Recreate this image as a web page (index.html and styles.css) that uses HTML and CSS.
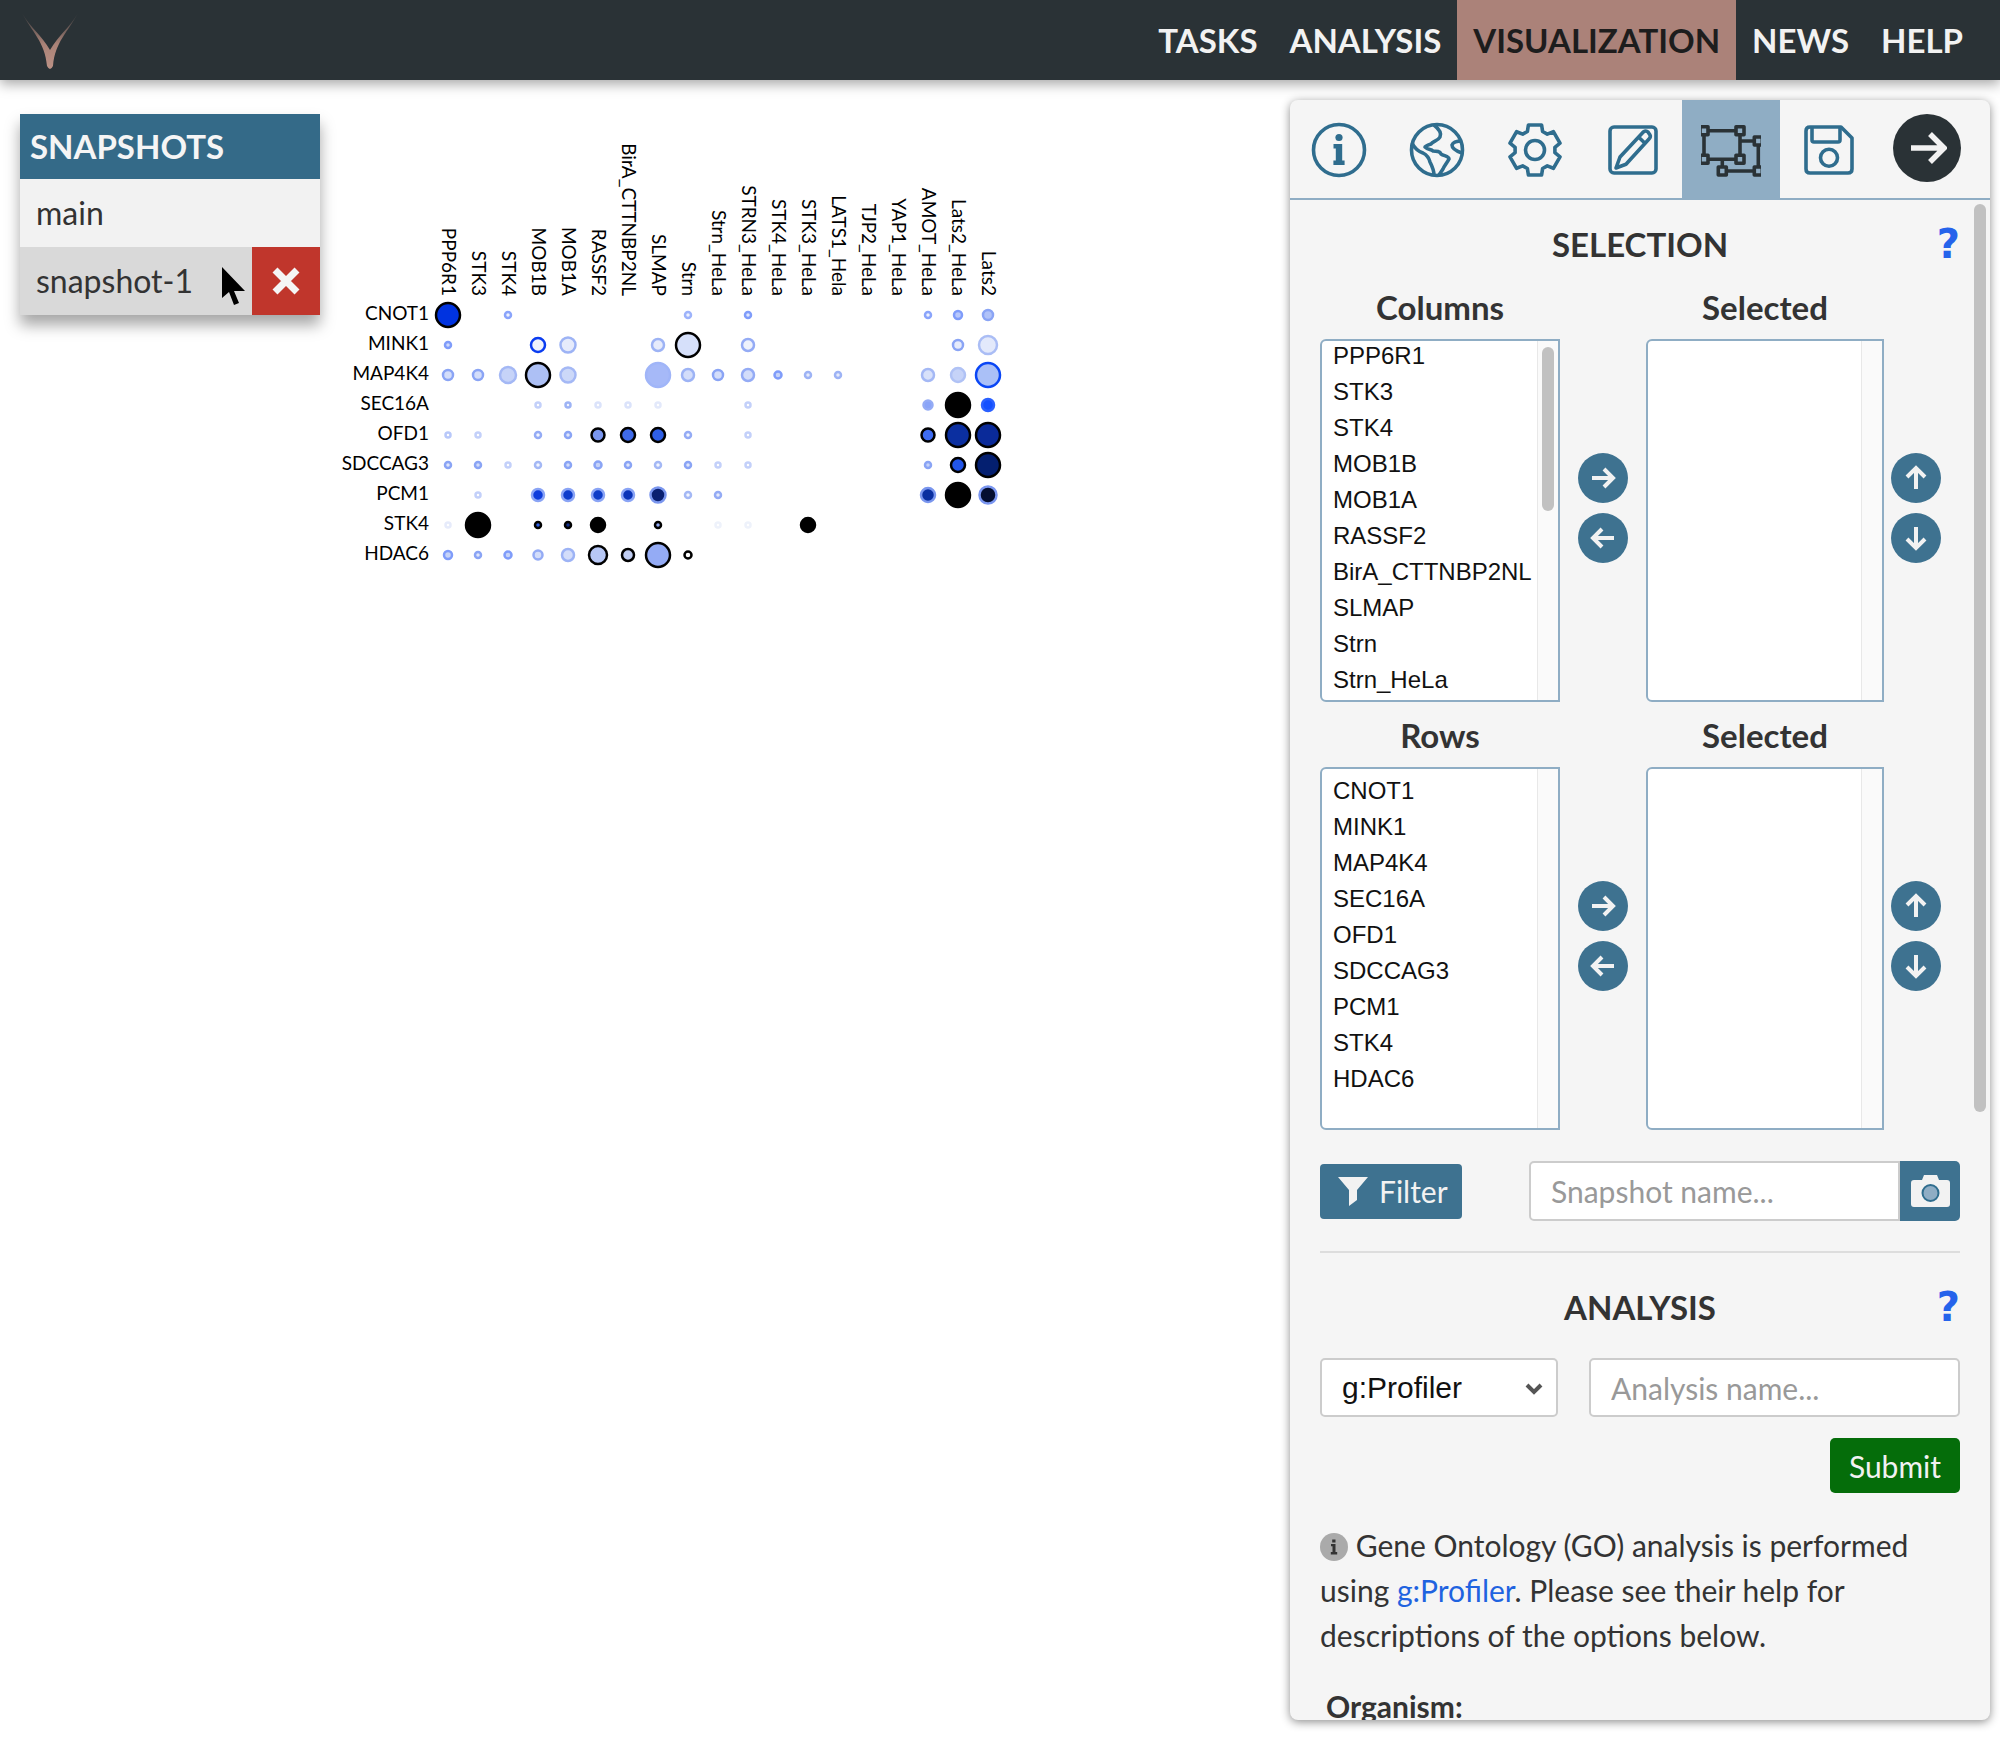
FILE: index.html
```html
<!DOCTYPE html>
<html lang="en">
<head>
    <meta charset="UTF-8">
    <title>Visualization</title>
    <link rel="stylesheet" href="styles.css">
</head>
<body>
    <header class="topbar">
        <svg class="logo" viewBox="0 0 100 80">
            <defs>
                <linearGradient id="logoFade" x1="0" y1="0" x2="0" y2="1">
                    <stop offset="0" stop-color="#2f3538"/>
                    <stop offset="0.55" stop-color="#a98277"/>
                    <stop offset="1" stop-color="#bb9185"/>
                </linearGradient>
            </defs>
            <path fill="url(#logoFade)" d="M22 13C32 32 45 42 47 66Q50 72 53 66C55 42 68 32 78 13C70 27 58 36 50 50C42 36 30 27 22 13Z"/>
        </svg>
        <nav class="topnav">
            <a class="topnav-item">TASKS</a>
            <a class="topnav-item">ANALYSIS</a>
            <a class="topnav-item active">VISUALIZATION</a>
            <a class="topnav-item">NEWS</a>
            <a class="topnav-item">HELP</a>
        </nav>
    </header>

    <main class="workspace">
        <div class="canvas">
            <section class="snapshots">
                <h2 class="snapshots-title">SNAPSHOTS</h2>
                <div class="snapshot-row">main</div>
                <div class="snapshot-row current">
                    <span class="snapshot-name">snapshot-1</span>
                    <button class="snapshot-delete">
                        <svg viewBox="0 0 30 28"><path d="M4 3L26 25M26 3L4 25"/></svg>
                    </button>
                    <svg class="cursor" viewBox="0 0 25 38"><path d="M1 0V31L8 25L13 38L18 36L13 24H24Z"/></svg>
                </div>
            </section>

            <svg class="dotplot" viewBox="330 140 680 440">
                <!-- column labels -->
                <g class="col-labels">
                    <text transform="translate(442 296) rotate(90)">PPP6R1</text>
                    <text transform="translate(472 296) rotate(90)">STK3</text>
                    <text transform="translate(502 296) rotate(90)">STK4</text>
                    <text transform="translate(532 296) rotate(90)">MOB1B</text>
                    <text transform="translate(562 296) rotate(90)">MOB1A</text>
                    <text transform="translate(592 296) rotate(90)">RASSF2</text>
                    <text transform="translate(622 296) rotate(90)">BirA_CTTNBP2NL</text>
                    <text transform="translate(652 296) rotate(90)">SLMAP</text>
                    <text transform="translate(682 296) rotate(90)">Strn</text>
                    <text transform="translate(712 296) rotate(90)">Strn_HeLa</text>
                    <text transform="translate(742 296) rotate(90)">STRN3_HeLa</text>
                    <text transform="translate(772 296) rotate(90)">STK4_HeLa</text>
                    <text transform="translate(802 296) rotate(90)">STK3_HeLa</text>
                    <text transform="translate(832 296) rotate(90)">LATS1_Hela</text>
                    <text transform="translate(862 296) rotate(90)">TJP2_HeLa</text>
                    <text transform="translate(892 296) rotate(90)">YAP1_HeLa</text>
                    <text transform="translate(922 296) rotate(90)">AMOT_HeLa</text>
                    <text transform="translate(952 296) rotate(90)">Lats2_HeLa</text>
                    <text transform="translate(982 296) rotate(90)">Lats2</text>
                </g>
                <!-- row labels -->
                <g class="row-labels">
                    <text x="429" y="320">CNOT1</text>
                    <text x="429" y="350">MINK1</text>
                    <text x="429" y="380">MAP4K4</text>
                    <text x="429" y="410">SEC16A</text>
                    <text x="429" y="440">OFD1</text>
                    <text x="429" y="470">SDCCAG3</text>
                    <text x="429" y="500">PCM1</text>
                    <text x="429" y="530">STK4</text>
                    <text x="429" y="560">HDAC6</text>
                </g>
                <!-- CNOT1 -->
                <g class="dots">
                    <circle cx="448" cy="315" r="12" fill="#0033e0" stroke="#000"/>
                    <circle cx="508" cy="315" r="3" fill="#eef2ff" stroke="#8aa4fb"/>
                    <circle cx="688" cy="315" r="3" fill="#eef2ff" stroke="#9db3fb"/>
                    <circle cx="748" cy="315" r="3" fill="#dfe7ff" stroke="#7f9cfa"/>
                    <circle cx="928" cy="315" r="3" fill="#eef2ff" stroke="#8aa4fb"/>
                    <circle cx="958" cy="315" r="4" fill="#b8c8fc" stroke="#7f9cfa"/>
                    <circle cx="988" cy="315" r="5" fill="#b0c2f8" stroke="#8aa4f5"/>
                </g>
                <!-- MINK1 -->
                <g class="dots">
                    <circle cx="448" cy="345" r="3" fill="#cfdafc" stroke="#7f9cfa"/>
                    <circle cx="538" cy="345" r="7" fill="#eef2fc" stroke="#0a3cf0"/>
                    <circle cx="568" cy="345" r="7.5" fill="#e6ebfb" stroke="#9db3f5"/>
                    <circle cx="658" cy="345" r="6" fill="#e6ebfb" stroke="#9db3f5"/>
                    <circle cx="688" cy="345" r="12" fill="#d6e0fa" stroke="#000"/>
                    <circle cx="748" cy="345" r="6" fill="#eef2fc" stroke="#94abf5"/>
                    <circle cx="958" cy="345" r="5" fill="#e6ebfb" stroke="#8aa4f5"/>
                    <circle cx="988" cy="345" r="9" fill="#e3e9fb" stroke="#aabdf5"/>
                </g>
                <!-- MAP4K4 -->
                <g class="dots">
                    <circle cx="448" cy="375" r="5" fill="#d3ddfa" stroke="#8aa4f5"/>
                    <circle cx="478" cy="375" r="5" fill="#d3ddfa" stroke="#8aa4f5"/>
                    <circle cx="508" cy="375" r="8" fill="#c6d3f8" stroke="#a4b8f5"/>
                    <circle cx="538" cy="375" r="12" fill="#adc0f5" stroke="#000"/>
                    <circle cx="568" cy="375" r="7.5" fill="#ccd8f8" stroke="#a4b8f5"/>
                    <circle cx="658" cy="375" r="12" fill="#a6b9f8" stroke="#a0b5f8"/>
                    <circle cx="688" cy="375" r="6" fill="#d3ddfa" stroke="#9db3f5"/>
                    <circle cx="718" cy="375" r="5" fill="#d3ddfa" stroke="#8aa4f5"/>
                    <circle cx="748" cy="375" r="6" fill="#d3ddfa" stroke="#94abf5"/>
                    <circle cx="778" cy="375" r="3.5" fill="#c6d3f8" stroke="#7f9cfa"/>
                    <circle cx="808" cy="375" r="3" fill="#e6ebfb" stroke="#9db3f5"/>
                    <circle cx="838" cy="375" r="3" fill="#e6ebfb" stroke="#9db3f5"/>
                    <circle cx="928" cy="375" r="6" fill="#d8e1fa" stroke="#a4b8f5"/>
                    <circle cx="958" cy="375" r="7" fill="#c6d3f8" stroke="#b0c2f5"/>
                    <circle cx="988" cy="375" r="12" fill="#aac0f7" stroke="#0a46f5"/>
                </g>
                <!-- SEC16A -->
                <g class="dots">
                    <circle cx="538" cy="405" r="2.5" fill="#fff" stroke="#c3d0fa" stroke-width="1.5"/>
                    <circle cx="568" cy="405" r="2.5" fill="#f3f6ff" stroke="#9db3f5"/>
                    <circle cx="598" cy="405" r="2.5" fill="#fff" stroke="#dbe3fb" stroke-width="1.5"/>
                    <circle cx="628" cy="405" r="2.5" fill="#fff" stroke="#dbe3fb" stroke-width="1.5"/>
                    <circle cx="658" cy="405" r="2.5" fill="#fff" stroke="#e3e9fb" stroke-width="1.5"/>
                    <circle cx="748" cy="405" r="2.5" fill="#fff" stroke="#c3d0fa" stroke-width="1.5"/>
                    <circle cx="928" cy="405" r="4.5" fill="#8aa4f8" stroke="#94abf5" stroke-width="1"/>
                    <circle cx="958" cy="405" r="12" fill="#000" stroke="#000"/>
                    <circle cx="988" cy="405" r="6" fill="#1450ff" stroke="#2a60ff" stroke-width="1"/>
                </g>
                <!-- OFD1 -->
                <g class="dots">
                    <circle cx="448" cy="435" r="2.5" fill="#fff" stroke="#b8c8fa" stroke-width="1.5"/>
                    <circle cx="478" cy="435" r="2.5" fill="#fff" stroke="#c3d0fa" stroke-width="1.5"/>
                    <circle cx="538" cy="435" r="3" fill="#f3f6ff" stroke="#94abf5"/>
                    <circle cx="568" cy="435" r="3" fill="#e0e7fb" stroke="#8aa4f5"/>
                    <circle cx="598" cy="435" r="6.5" fill="#7a96ee" stroke="#000"/>
                    <circle cx="628" cy="435" r="7" fill="#3f6ae8" stroke="#000"/>
                    <circle cx="658" cy="435" r="7" fill="#2f5fe5" stroke="#000"/>
                    <circle cx="688" cy="435" r="3" fill="#f3f6ff" stroke="#94abf5"/>
                    <circle cx="748" cy="435" r="2.5" fill="#fff" stroke="#c3d0fa" stroke-width="1.5"/>
                    <circle cx="928" cy="435" r="6.5" fill="#3e6cf2" stroke="#000"/>
                    <circle cx="958" cy="435" r="12" fill="#0b2fa0" stroke="#000"/>
                    <circle cx="988" cy="435" r="12" fill="#0a2a99" stroke="#000"/>
                </g>
                <!-- SDCCAG3 -->
                <g class="dots">
                    <circle cx="448" cy="465" r="3" fill="#e0e7fb" stroke="#8aa4f5"/>
                    <circle cx="478" cy="465" r="3" fill="#d3ddfa" stroke="#8aa4f5"/>
                    <circle cx="508" cy="465" r="2.5" fill="#fff" stroke="#c3d0fa" stroke-width="1.5"/>
                    <circle cx="538" cy="465" r="3" fill="#f3f6ff" stroke="#a4b8f5"/>
                    <circle cx="568" cy="465" r="3" fill="#d3ddfa" stroke="#8aa4f5"/>
                    <circle cx="598" cy="465" r="3.5" fill="#c6d3f8" stroke="#8aa4f5"/>
                    <circle cx="628" cy="465" r="3" fill="#e0e7fb" stroke="#8aa4f5"/>
                    <circle cx="658" cy="465" r="3" fill="#f3f6ff" stroke="#a4b8f5"/>
                    <circle cx="688" cy="465" r="3" fill="#e0e7fb" stroke="#8aa4f5"/>
                    <circle cx="718" cy="465" r="2.5" fill="#fff" stroke="#c3d0fa" stroke-width="1.5"/>
                    <circle cx="748" cy="465" r="2.5" fill="#fff" stroke="#c3d0fa" stroke-width="1.5"/>
                    <circle cx="928" cy="465" r="3" fill="#c6d3f8" stroke="#8aa4f5"/>
                    <circle cx="958" cy="465" r="7" fill="#2255e8" stroke="#000"/>
                    <circle cx="988" cy="465" r="12" fill="#041f70" stroke="#000"/>
                </g>
                <!-- PCM1 -->
                <g class="dots">
                    <circle cx="478" cy="495" r="2.5" fill="#fff" stroke="#c3d0fa" stroke-width="1.5"/>
                    <circle cx="538" cy="495" r="6" fill="#0d3cdc" stroke="#8aa4f5" stroke-width="3"/>
                    <circle cx="568" cy="495" r="6" fill="#0d3ccc" stroke="#8aa4f5" stroke-width="3"/>
                    <circle cx="598" cy="495" r="6" fill="#0d3cc8" stroke="#8aa4f5" stroke-width="3"/>
                    <circle cx="628" cy="495" r="6" fill="#0a33b8" stroke="#8aa4f5" stroke-width="3"/>
                    <circle cx="658" cy="495" r="7.5" fill="#0a2070" stroke="#7a96ee" stroke-width="3"/>
                    <circle cx="688" cy="495" r="3" fill="#f3f6ff" stroke="#a4b8f5"/>
                    <circle cx="718" cy="495" r="3" fill="#e6ebfb" stroke="#94abf5"/>
                    <circle cx="928" cy="495" r="7" fill="#0a2fa0" stroke="#7a96ee" stroke-width="3"/>
                    <circle cx="958" cy="495" r="12" fill="#000" stroke="#000"/>
                    <circle cx="988" cy="495" r="8.5" fill="#050f30" stroke="#7a96f0" stroke-width="3"/>
                </g>
                <!-- STK4 -->
                <g class="dots">
                    <circle cx="448" cy="525" r="2.5" fill="#fff" stroke="#e6ebfb" stroke-width="1.5"/>
                    <circle cx="478" cy="525" r="12" fill="#000" stroke="#000"/>
                    <circle cx="538" cy="525" r="3" fill="#2f5fe5" stroke="#000"/>
                    <circle cx="568" cy="525" r="3" fill="#14308a" stroke="#000"/>
                    <circle cx="598" cy="525" r="7" fill="#000" stroke="#000"/>
                    <circle cx="658" cy="525" r="3" fill="#94abf5" stroke="#000"/>
                    <circle cx="718" cy="525" r="2.5" fill="#fff" stroke="#eef2fb" stroke-width="1.5"/>
                    <circle cx="748" cy="525" r="2.5" fill="#fff" stroke="#eef2fb" stroke-width="1.5"/>
                    <circle cx="808" cy="525" r="7" fill="#000" stroke="#000"/>
                </g>
                <!-- HDAC6 -->
                <g class="dots">
                    <circle cx="448" cy="555" r="4" fill="#c6d3f8" stroke="#7f9cfa"/>
                    <circle cx="478" cy="555" r="3" fill="#e0e7fb" stroke="#8aa4f5"/>
                    <circle cx="508" cy="555" r="3.5" fill="#c6d3f8" stroke="#7f9cfa"/>
                    <circle cx="538" cy="555" r="4.5" fill="#d3ddfa" stroke="#94abf5"/>
                    <circle cx="568" cy="555" r="6" fill="#d3ddfa" stroke="#9db3f5"/>
                    <circle cx="598" cy="555" r="9" fill="#b7c7f5" stroke="#000"/>
                    <circle cx="628" cy="555" r="6" fill="#c0cdf2" stroke="#000"/>
                    <circle cx="658" cy="555" r="12" fill="#94abf5" stroke="#000"/>
                    <circle cx="688" cy="555" r="3.5" fill="#fff" stroke="#000"/>
                </g>
            </svg>
        </div>

        <aside class="panel">
            <div class="panel-tabs">
                <div class="panel-tab">
                    <svg class="tab-icon" viewBox="-30 -30 60 60">
                        <circle r="25.5"/>
                        <circle class="solid" cy="-12.5" r="3.6"/>
                        <path class="solid" d="M-5.5 -6H3.2V10.5H5.6V15H-5.6V10.5H-3.2V-1.6H-5.5Z"/>
                    </svg>
                </div>
                <div class="panel-tab">
                    <svg class="tab-icon" viewBox="-30 -30 60 60">
                        <circle r="25.5"/>
                        <path d="M-3 -25C2 -21 5 -17 3 -13C1 -9 -4 -9 -6 -6C-9 -5 -12 -4 -12 -3C-9 0 -6 -1 -4 1C0 1 3 1 4 4C7 6 12 6 12 9C10 13 7 16 6 19L2 25M-25 -7C-22 -1 -17 2 -14 3C-10 5 -8 8 -7 12C-5 16 -3 20 -3 25M25 -9C20 -9 16 -8 15 -5C15 -1 19 1 25 3"/>
                    </svg>
                </div>
                <div class="panel-tab">
                    <svg class="tab-icon" viewBox="-30 -30 60 60">
                        <polygon points="-7.6,-18.5 -6.6,-25 6.6,-25 7.6,-18.5 12.3,-15.9 18.4,-18.3 25,-6.8 19.9,-2.7 19.9,2.7 25,6.8 18.4,18.3 12.3,15.9 7.6,18.5 6.6,25 -6.6,25 -7.6,18.5 -12.3,15.9 -18.4,18.3 -25,6.8 -19.9,2.7 -19.9,-2.7 -25,-6.8 -18.4,-18.3 -12.3,-15.9"/>
                        <circle r="9.5"/>
                    </svg>
                </div>
                <div class="panel-tab">
                    <svg class="tab-icon" viewBox="-30 -30 60 60">
                        <rect x="-23" y="-23" width="46" height="46" rx="4"/>
                        <path d="M-17 18L-13 7L10.3 -18Q13 -20 15 -18L17 -15Q18 -13 16 -11L-7 14.3ZM6 -12.5L12 -6.7"/>
                    </svg>
                </div>
                <div class="panel-tab active">
                    <svg class="tab-icon" viewBox="-30 -30 60 60">
                        <path d="M-27 -19.3H9V9.3H-27ZM9 -9H27.3V21H-8.7V9.3"/>
                        <rect class="node" x="-31" y="-23.3" width="8" height="8"/>
                        <rect class="node" x="5" y="-23.3" width="8" height="8"/>
                        <rect class="node" x="-31" y="5.3" width="8" height="8"/>
                        <rect class="node" x="5" y="5.3" width="8" height="8"/>
                        <rect class="node" x="23.3" y="-13" width="8" height="8"/>
                        <rect class="node" x="23.3" y="17" width="8" height="8"/>
                        <rect class="node" x="-12.7" y="17" width="8" height="8"/>
                    </svg>
                </div>
                <div class="panel-tab">
                    <svg class="tab-icon" viewBox="-30 -30 60 60">
                        <path d="M-19 -23H12L23 -12V19Q23 23 19 23H-19Q-23 23 -23 19V-19Q-23 -23 -19 -23Z"/>
                        <path d="M-17 -23V-10Q-17 -8 -15 -8H9Q11 -8 11 -10V-23"/>
                        <circle cy="7.7" r="8.5"/>
                    </svg>
                </div>
                <button class="panel-close">
                    <svg viewBox="-20 -20 40 40"><path d="M-16 0H15M3 -14L17 0L3 14"/></svg>
                </button>
            </div>

            <div class="panel-scrollbar"></div>

            <div class="panel-body">
                <div class="section-title">
                    <h3>SELECTION</h3>
                    <span class="help">?</span>
                </div>

                <div class="picker">
                    <h4>Columns</h4>
                    <h4 class="picker-right">Selected</h4>
                    <div class="listbox scrolled">
                        <div class="listbox-items">
                            <div class="option">PPP6R1</div>
                            <div class="option">STK3</div>
                            <div class="option">STK4</div>
                            <div class="option">MOB1B</div>
                            <div class="option">MOB1A</div>
                            <div class="option">RASSF2</div>
                            <div class="option">BirA_CTTNBP2NL</div>
                            <div class="option">SLMAP</div>
                            <div class="option">Strn</div>
                            <div class="option">Strn_HeLa</div>
                        </div>
                        <div class="listbox-track"><div class="listbox-thumb"></div></div>
                    </div>
                    <div class="move-buttons">
                        <button class="round-btn"><svg viewBox="-13 -13 26 26"><path d="M-11 0H10M1 -9L10 0L1 9"/></svg></button>
                        <button class="round-btn"><svg viewBox="-13 -13 26 26"><path d="M11 0H-10M-1 -9L-10 0L-1 9"/></svg></button>
                    </div>
                    <div class="listbox">
                        <div class="listbox-items"></div>
                        <div class="listbox-track"></div>
                    </div>
                    <div class="move-buttons">
                        <button class="round-btn"><svg viewBox="-13 -13 26 26"><path d="M0 11V-10M-9 -1L0 -10L9 -1"/></svg></button>
                        <button class="round-btn"><svg viewBox="-13 -13 26 26"><path d="M0 -11V10M-9 1L0 10L9 1"/></svg></button>
                    </div>
                </div>

                <div class="picker">
                    <h4>Rows</h4>
                    <h4 class="picker-right">Selected</h4>
                    <div class="listbox">
                        <div class="listbox-items">
                            <div class="option">CNOT1</div>
                            <div class="option">MINK1</div>
                            <div class="option">MAP4K4</div>
                            <div class="option">SEC16A</div>
                            <div class="option">OFD1</div>
                            <div class="option">SDCCAG3</div>
                            <div class="option">PCM1</div>
                            <div class="option">STK4</div>
                            <div class="option">HDAC6</div>
                        </div>
                        <div class="listbox-track"></div>
                    </div>
                    <div class="move-buttons">
                        <button class="round-btn"><svg viewBox="-13 -13 26 26"><path d="M-11 0H10M1 -9L10 0L1 9"/></svg></button>
                        <button class="round-btn"><svg viewBox="-13 -13 26 26"><path d="M11 0H-10M-1 -9L-10 0L-1 9"/></svg></button>
                    </div>
                    <div class="listbox">
                        <div class="listbox-items"></div>
                        <div class="listbox-track"></div>
                    </div>
                    <div class="move-buttons">
                        <button class="round-btn"><svg viewBox="-13 -13 26 26"><path d="M0 11V-10M-9 -1L0 -10L9 -1"/></svg></button>
                        <button class="round-btn"><svg viewBox="-13 -13 26 26"><path d="M0 -11V10M-9 1L0 10L9 1"/></svg></button>
                    </div>
                </div>

                <div class="filter-row">
                    <button class="filter-btn">
                        <svg viewBox="0 0 30 30"><path d="M0 1H30L19 14V24L11 30V14Z"/></svg>
                        Filter
                    </button>
                    <div class="snapshot-form">
                        <input type="text" placeholder="Snapshot name...">
                        <button class="camera-btn">
                            <svg viewBox="0 0 39 32">
                                <path class="camera-body" d="M3 5H11L13 0H26L28 5H36Q39 5 39 8V29Q39 32 36 32H3Q0 32 0 29V8Q0 5 3 5Z"/>
                                <circle class="camera-lens" cx="19.5" cy="18" r="8"/>
                            </svg>
                        </button>
                    </div>
                </div>

                <hr class="divider">

                <div class="section-title analysis">
                    <h3>ANALYSIS</h3>
                    <span class="help">?</span>
                </div>

                <div class="analysis-row">
                    <div class="tool-select">
                        <select>
                            <option>g:Profiler</option>
                        </select>
                        <svg viewBox="0 0 18 12"><path d="M2 2L9 9L16 2"/></svg>
                    </div>
                    <input type="text" placeholder="Analysis name...">
                </div>

                <div class="submit-row">
                    <button class="submit-btn">Submit</button>
                </div>

                <p class="analysis-note">
                    <svg class="note-icon" viewBox="-14 -14 28 28">
                        <circle r="14"/>
                        <path d="M-3 -3H1.5V5H3.2V7.5H-3.2V5H-1.5V-.8H-3ZM-1.8 -7.5H1.5V-4.6H-1.8Z"/>
                    </svg>
                    Gene Ontology (GO) analysis is performed using <a>g:Profiler</a>. Please see their help for descriptions of the options below.
                </p>

                <h4 class="organism">Organism:</h4>
            </div>
        </aside>
    </main>
</body>
</html>
```

FILE: styles.css
```css
* {
    margin: 0;
    padding: 0;
    box-sizing: border-box;
}

body {
    width: 2000px;
    height: 1740px;
    overflow: hidden;
    background-color: #fff;
    color: #333;
    font-family: Lato, sans-serif;
}

button {
    border: none;
    cursor: pointer;
    font-family: inherit;
}

/* Top bar */
.topbar {
    position: relative;
    z-index: 2;
    display: flex;
    justify-content: space-between;
    height: 80px;
    padding-right: 21px;
    background-color: #2a3236;
    box-shadow: 0 4px 12px rgba(0, 0, 0, 0.35);
}

.logo {
    width: 100px;
    height: 80px;
}

.topnav {
    display: flex;
}

.topnav-item {
    padding: 0 16px;
    color: #f2f2f2;
    font-size: 33px;
    font-weight: 700;
    line-height: 80px;
}

.topnav-item.active {
    background-color: #ab8279;
    color: #1d1d1d;
}

/* Main area */
.workspace {
    display: flex;
    justify-content: space-between;
    height: 1660px;
    padding: 20px 10px 20px 20px;
}

.canvas {
    display: flex;
    align-items: flex-start;
}

/* Snapshots box */
.snapshots {
    width: 300px;
    margin-top: 14px;
    font-size: 32px;
    box-shadow: 0 10px 14px rgba(0, 0, 0, 0.35);
}

.snapshots-title {
    height: 65px;
    padding-left: 10px;
    background-color: #346a88;
    color: #f5f5f5;
    font-size: 33px;
    font-weight: 700;
    line-height: 65px;
}

.snapshot-row {
    height: 68px;
    padding-left: 16px;
    background-color: #f2f2f2;
    line-height: 68px;
}

.snapshot-row.current {
    position: relative;
    display: flex;
    justify-content: space-between;
    background-color: #d9d9d9;
}

.snapshot-delete {
    display: flex;
    justify-content: center;
    align-items: center;
    width: 68px;
    height: 68px;
    background-color: #c0362c;
}

.snapshot-delete svg {
    width: 30px;
    height: 28px;
    fill: none;
    stroke: #f5f5f5;
    stroke-width: 7;
}

.cursor {
    position: absolute;
    left: 201px;
    top: 20px;
    width: 25px;
    height: 38px;
}

/* Dot plot */
.dotplot {
    width: 680px;
    height: 440px;
    margin-top: 40px;
    margin-left: 10px;
}

.dotplot text {
    fill: #000;
    font-family: Lato, sans-serif;
    font-size: 19px;
}

.col-labels text,
.row-labels text {
    text-anchor: end;
}

.dots circle {
    stroke-width: 2.5;
}

/* Right panel */
.panel {
    position: relative;
    width: 700px;
    height: 1620px;
    overflow: hidden;
    background-color: #f5f5f5;
    border-radius: 8px;
    box-shadow: 0 2px 10px rgba(0, 0, 0, 0.45);
}

.panel-tabs {
    display: flex;
    align-items: stretch;
    height: 100px;
    border-bottom: 2px solid #8fadc4;
}

.panel-tab {
    display: flex;
    justify-content: center;
    align-items: center;
    width: 98px;
    height: 100px;
    flex: none;
}

.panel-tab.active {
    background-color: #8fadc4;
}

.tab-icon {
    width: 60px;
    height: 60px;
    fill: none;
    stroke: #2f6d8e;
    stroke-width: 3.6;
    stroke-linejoin: round;
}

.tab-icon .solid {
    fill: #2f6d8e;
    stroke: none;
}

.panel-tab.active .tab-icon {
    stroke: #2a3236;
}

.tab-icon .node {
    fill: #8fadc4;
}

.panel-close {
    width: 68px;
    height: 68px;
    margin: 14px 0 0 15px;
    background-color: #2a3236;
    border-radius: 50%;
}

.panel-close svg {
    display: block;
    width: 40px;
    height: 40px;
    margin: 0 auto;
    fill: none;
    stroke: #f2f2f2;
    stroke-width: 5.5;
}

.panel-scrollbar {
    position: absolute;
    top: 104px;
    right: 4px;
    width: 12px;
    height: 908px;
    background-color: #c1c1c1;
    border-radius: 6px;
}

.panel-body {
    padding: 14px 30px 0;
}

.section-title {
    display: grid;
    grid-template-columns: 1fr auto 1fr;
    align-items: center;
    height: 60px;
}

.section-title h3 {
    grid-column: 2;
    color: #333;
    font-size: 33px;
    font-weight: 700;
}

.help {
    justify-self: end;
    color: #2563eb;
    font-family: "DejaVu Sans", sans-serif;
    font-size: 40px;
    font-weight: 700;
    line-height: 60px;
}

/* Column / row pickers */
.picker {
    display: grid;
    grid-template-columns: 240px 86px 238px 76px;
    grid-template-rows: 65px auto;
}

.picker h4 {
    align-self: center;
    text-align: center;
    color: #333;
    font-size: 33px;
    font-weight: 700;
}

.picker .picker-right {
    grid-column: 3;
}

.picker > h4:first-child {
    grid-column: 1;
}

.listbox {
    grid-row: 2;
    display: flex;
    height: 363px;
    overflow: hidden;
    background-color: #fff;
    border: 2px solid #8fadc4;
    border-radius: 6px 0 0 6px;
}

.listbox-items {
    flex: 1;
    padding: 4px 0 0 11px;
    color: #111;
    font-family: "Liberation Sans", Arial, sans-serif;
    font-size: 24px;
}

.listbox.scrolled .listbox-items {
    padding-top: 0;
    margin-top: -3px;
}

.option {
    height: 36px;
    line-height: 36px;
    white-space: nowrap;
}

.listbox-track {
    width: 21px;
    padding: 6px 4px;
    background-color: #fafafa;
    border-left: 1px solid #e8e8e8;
}

.listbox-thumb {
    width: 12px;
    height: 164px;
    background-color: #c1c1c1;
    border-radius: 6px;
}

.move-buttons {
    grid-row: 2;
    display: flex;
    flex-direction: column;
    align-items: center;
    gap: 10px;
    padding-top: 114px;
}

.move-buttons:last-child {
    padding-right: 12px;
}

.round-btn {
    display: flex;
    justify-content: center;
    align-items: center;
    width: 50px;
    height: 50px;
    background-color: #3e7290;
    border-radius: 50%;
}

.round-btn svg {
    width: 26px;
    height: 26px;
    fill: none;
    stroke: #f2f2f2;
    stroke-width: 4;
}

/* Filter + snapshot name */
.filter-row {
    display: flex;
    justify-content: space-between;
    align-items: center;
    margin-top: 31px;
}

.filter-btn {
    display: flex;
    align-items: center;
    gap: 11px;
    width: 142px;
    height: 55px;
    padding-left: 18px;
    background-color: #3e7290;
    border-radius: 4px;
    color: #f2f2f2;
    font-size: 30px;
}

.filter-btn svg {
    width: 30px;
    height: 30px;
    fill: #f2f2f2;
}

.snapshot-form {
    display: flex;
    width: 431px;
    height: 60px;
}

input[type="text"] {
    height: 100%;
    padding-left: 20px;
    background-color: #fff;
    border: 2px solid #ccc;
    border-radius: 5px;
    color: #333;
    font-family: Lato, sans-serif;
    font-size: 30px;
}

input::placeholder {
    color: #999;
    opacity: 1;
}

.snapshot-form input {
    width: 371px;
    border-radius: 5px 0 0 5px;
}

.camera-btn {
    display: flex;
    justify-content: center;
    align-items: center;
    width: 60px;
    background-color: #3e7290;
    border-radius: 0 5px 5px 0;
}

.camera-btn svg {
    width: 39px;
    height: 32px;
}

.camera-body {
    fill: #f2f2f2;
}

.camera-lens {
    fill: #8fadc4;
    stroke: #2f6d8e;
    stroke-width: 2;
}

.divider {
    height: 2px;
    margin-top: 30px;
    background-color: #ddd;
    border: none;
}

.section-title.analysis {
    margin-top: 24px;
}

/* Analysis form */
.analysis-row {
    display: flex;
    justify-content: space-between;
    height: 59px;
    margin-top: 21px;
}

.analysis-row input {
    width: 371px;
}

.tool-select {
    position: relative;
    width: 238px;
}

.tool-select select {
    width: 100%;
    height: 100%;
    padding-left: 20px;
    appearance: none;
    background-color: #fff;
    border: 2px solid #ccc;
    border-radius: 5px;
    color: #111;
    font-family: "Liberation Sans", Arial, sans-serif;
    font-size: 30px;
}

.tool-select svg {
    position: absolute;
    right: 15px;
    top: 25px;
    width: 18px;
    height: 12px;
    fill: none;
    stroke: #555;
    stroke-width: 4;
}

.submit-row {
    display: flex;
    justify-content: flex-end;
    margin-top: 21px;
}

.submit-btn {
    width: 130px;
    height: 55px;
    background-color: #056d0a;
    border-radius: 5px;
    color: #f2f2f2;
    font-size: 30px;
}

.analysis-note {
    margin-top: 30px;
    color: #333;
    font-size: 30px;
    line-height: 45px;
}

.analysis-note a {
    color: #1f63e0;
}

.note-icon {
    width: 28px;
    height: 28px;
    vertical-align: -4px;
}

.note-icon circle {
    fill: #aaa;
}

.note-icon path {
    fill: #333;
}

.organism {
    margin-top: 26px;
    padding-left: 6px;
    color: #333;
    font-size: 30px;
    font-weight: 700;
    line-height: 45px;
}
```
